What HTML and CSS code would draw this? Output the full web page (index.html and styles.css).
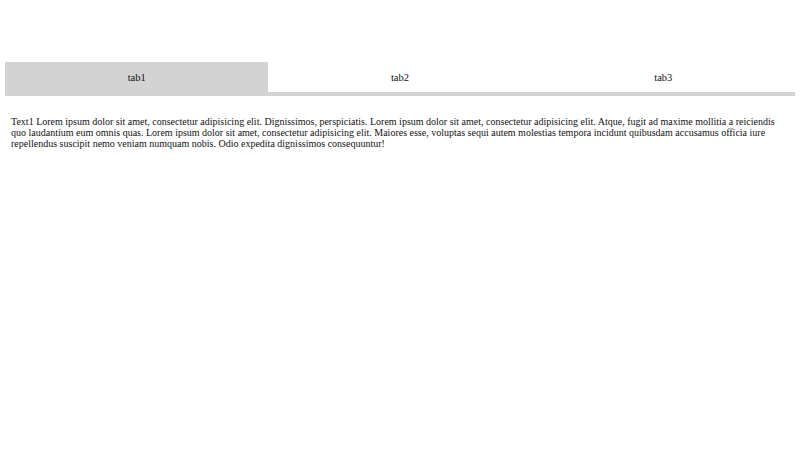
FILE: index.html
```html
<!DOCTYPE html>
<html>
<head>
<meta charset="utf-8">
<link rel="stylesheet" href="styles.css">
</head>
<body>
<div class="tabs">
  <div class="tabbar">
    <div class="tab active">tab1</div>
    <div class="tab">tab2</div>
    <div class="tab">tab3</div>
  </div>
  <div class="panel">
    <p class="text">Text1 Lorem ipsum dolor sit amet, consectetur adipisicing elit. Dignissimos, perspiciatis. Lorem ipsum dolor sit amet, consectetur adipisicing elit. Atque, fugit ad maxime mollitia a reiciendis quo laudantium eum omnis quas. Lorem ipsum dolor sit amet, consectetur adipisicing elit. Maiores esse, voluptas sequi autem molestias tempora incidunt quibusdam accusamus officia iure repellendus suscipit nemo veniam numquam nobis. Odio expedita dignissimos consequuntur!</p>
  </div>
</div>
</body>
</html>
```
FILE: styles.css
```css
html, body {
  margin: 0;
  padding: 0;
  background: #fff;
}
body {
  font-family: "Liberation Serif", "Times New Roman", serif;
  color: #111;
}
.tabs {
  margin: 62px 5px 0 5px;
}
.tabbar {
  display: flex;
}
.tab {
  flex: 1;
  height: 30px;
  line-height: 32px;
  text-align: center;
  font-size: 10.5px;
  border-bottom: 4px solid #d3d3d3;
}
.tab.active {
  background: #d3d3d3;
}
.panel {
  padding: 20px 6px 0 6px;
}
.text {
  margin: 0;
  font-size: 10px;
  line-height: normal;
}
```
